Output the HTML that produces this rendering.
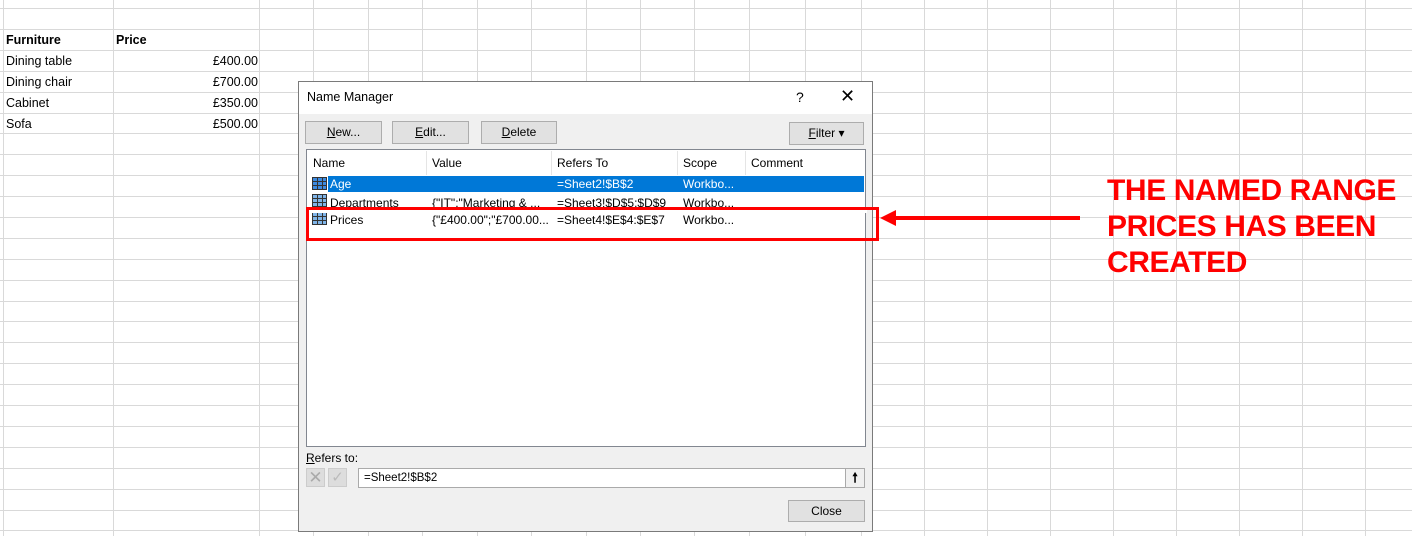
<!DOCTYPE html>
<html><head><style>
*{margin:0;padding:0;box-sizing:border-box}
body{width:1412px;height:536px;position:relative;overflow:hidden;background:#fff;font-family:"Liberation Sans",sans-serif}
.a{position:absolute}
.cl{position:absolute;top:0;height:536px;width:1px;background:#d9d9d9}
.rl{position:absolute;left:0;width:1412px;height:1px;background:#d9d9d9}
.c{position:absolute;font-size:12.5px;color:#000}
.btn{position:absolute;background:#e1e1e1;border:1px solid #adadad;font-size:12px;text-align:center;line-height:21px;color:#000}
.h{position:absolute;top:156px;font-size:12px;color:#000}
.t{position:absolute;font-size:12px;white-space:nowrap}
.ico{position:absolute;width:15px;height:13px;border:1px solid #333;background:
linear-gradient(#333,#333) 0 3px/100% 1px no-repeat,linear-gradient(#333,#333) 0 7px/100% 1px no-repeat,
linear-gradient(#333,#333) 4px 0/1px 100% no-repeat,linear-gradient(#333,#333) 9px 0/1px 100% no-repeat,#7fb4e8}
.sep{position:absolute;top:151px;width:1px;height:24px;background:#e5e5e5}
.red{position:absolute;left:1107px;font-size:30px;font-weight:bold;color:#f00;letter-spacing:-0.4px;line-height:36px}
</style></head><body>
<div id="g"></div>
<script>
var g=document.getElementById('g'),h='';
var xs=[3,113,259,313,368,422,477,531,586,640,694,749,805,861,924,987,1050,1113,1176,1239,1302,1365];
xs.forEach(function(x){h+='<div class="cl" style="left:'+x+'px"></div>'});
for(var y=8;y<536;y+=20.9){h+='<div class="rl" style="top:'+Math.round(y)+'px"></div>'}
g.innerHTML=h;
</script>
<div class="c" style="left:6px;top:33px;font-weight:bold">Furniture</div>
<div class="c" style="left:116px;top:33px;font-weight:bold">Price</div>
<div class="c" style="left:6px;top:54px">Dining table</div>
<div class="c" style="left:6px;top:75px">Dining chair</div>
<div class="c" style="left:6px;top:96px">Cabinet</div>
<div class="c" style="left:6px;top:117px">Sofa</div>
<div class="c" style="left:200px;top:54px;width:58px;text-align:right">£400.00</div>
<div class="c" style="left:200px;top:75px;width:58px;text-align:right">£700.00</div>
<div class="c" style="left:200px;top:96px;width:58px;text-align:right">£350.00</div>
<div class="c" style="left:200px;top:117px;width:58px;text-align:right">£500.00</div>

<div class="a" style="left:298px;top:81px;width:575px;height:451px;background:#f0f0f0;border:1px solid #7a7a7a"></div>
<div class="a" style="left:299px;top:82px;width:573px;height:32px;background:#fff"></div>
<div class="t" style="left:307px;top:90px;font-size:12.5px">Name Manager</div>
<div class="t" style="left:796px;top:89px;font-size:14px">?</div>
<div class="t" style="left:840px;top:86px;font-size:18px">✕</div>
<div class="btn" style="left:305px;top:121px;width:77px;height:23px"><u>N</u>ew...</div>
<div class="btn" style="left:392px;top:121px;width:77px;height:23px"><u>E</u>dit...</div>
<div class="btn" style="left:481px;top:121px;width:76px;height:23px"><u>D</u>elete</div>
<div class="btn" style="left:789px;top:122px;width:75px;height:23px"><u>F</u>ilter ▾</div>
<div class="a" style="left:306px;top:149px;width:560px;height:298px;background:#fff;border:1px solid #828790"></div>
<div class="h" style="left:313px">Name</div><div class="h" style="left:432px">Value</div><div class="h" style="left:557px">Refers To</div><div class="h" style="left:683px">Scope</div><div class="h" style="left:751px">Comment</div>
<div class="sep" style="left:426px"></div><div class="sep" style="left:551px"></div><div class="sep" style="left:677px"></div><div class="sep" style="left:745px"></div>
<div class="a" style="left:328px;top:176px;width:536px;height:16px;background:#0078d7"></div>
<div class="ico" style="left:312px;top:177px;background-color:#3c8ae0"></div>
<div class="ico" style="left:312px;top:194px"></div>
<div class="ico" style="left:312px;top:212px"></div>
<div class="t" style="left:330px;top:177px;color:#fff">Age</div>
<div class="t" style="left:557px;top:177px;color:#fff">=Sheet2!$B$2</div>
<div class="t" style="left:683px;top:177px;color:#fff">Workbo...</div>
<div class="t" style="left:330px;top:196px">Departments</div>
<div class="t" style="left:432px;top:196px">{"IT";"Marketing &amp; ...</div>
<div class="t" style="left:557px;top:196px">=Sheet3!$D$5:$D$9</div>
<div class="t" style="left:683px;top:196px">Workbo...</div>
<div class="a" style="left:307px;top:208px;width:560px;height:5px;background:#fff"></div>
<div class="t" style="left:330px;top:213px">Prices</div>
<div class="t" style="left:432px;top:213px">{"£400.00";"£700.00...</div>
<div class="t" style="left:557px;top:213px">=Sheet4!$E$4:$E$7</div>
<div class="t" style="left:683px;top:213px">Workbo...</div>
<div class="a" style="left:306px;top:207px;width:573px;height:34px;border:3px solid #f00"></div>
<div class="a" style="left:893px;top:216px;width:187px;height:4px;background:#f00"></div>
<svg class="a" style="left:878px;top:208px" width="20" height="20"><polygon points="2,10 18,2 18,18" fill="#f00"/></svg>
<div class="red" style="top:173px">THE NAMED RANGE</div>
<div class="red" style="top:209px">PRICES HAS BEEN</div>
<div class="red" style="top:245px">CREATED</div>

<div class="t" style="left:306px;top:451px"><u>R</u>efers to:</div>
<div class="a" style="left:306px;top:468px;width:19px;height:19px;background:#ddd;border:1px solid #ccc;color:#aaa;font-size:17px;line-height:17px;text-align:center">✕</div>
<div class="a" style="left:328px;top:468px;width:19px;height:19px;background:#ddd;border:1px solid #ccc;color:#bbb;font-size:15px;line-height:17px;text-align:center">✓</div>
<div class="a" style="left:358px;top:468px;width:507px;height:20px;background:#fff;border:1px solid #aaa"></div>
<div class="t" style="left:364px;top:472px;font-size:11.5px">=Sheet2!$B$2</div>
<div class="a" style="left:845px;top:469px;width:19px;height:18px;background:#f0f0f0;border-left:1px solid #aaa;text-align:center;font-size:13px;font-weight:bold;line-height:17px">🠕</div>
<div class="btn" style="left:788px;top:500px;width:77px;height:22px">Close</div>
</body></html>
